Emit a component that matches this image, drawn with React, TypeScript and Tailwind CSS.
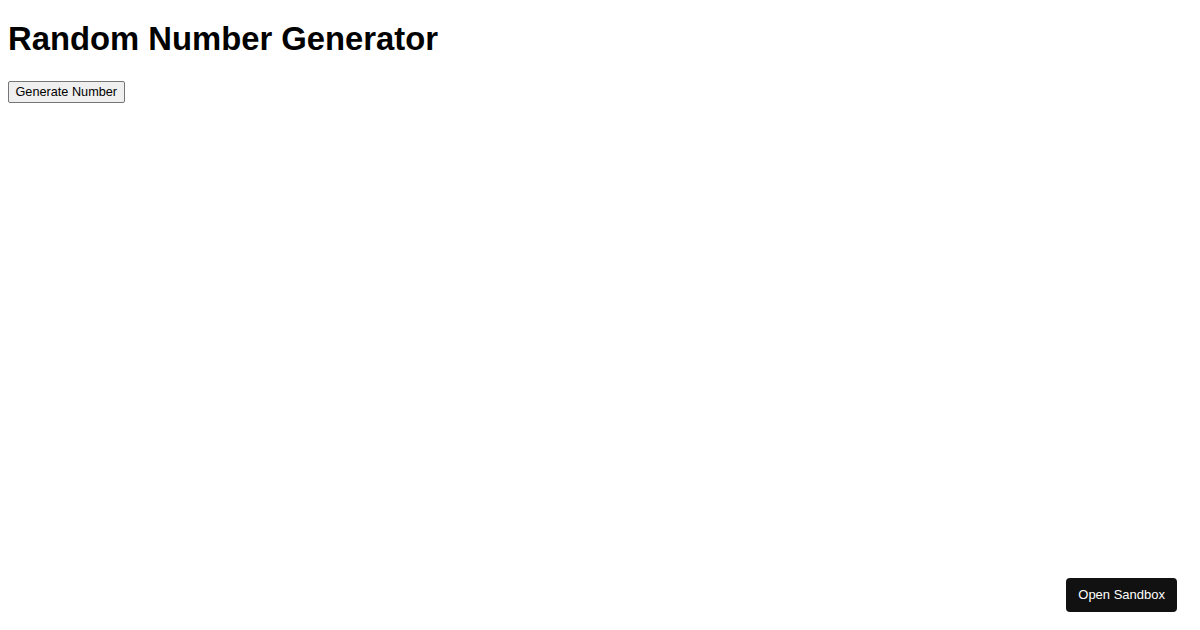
export default function App() {
  return (
    <div className="min-h-screen bg-white text-black font-['Liberation_Sans',Arial,sans-serif]">
      <div className="px-2 pt-[20px]">
        <h1 className="text-[32.8px] font-bold leading-[38px]">Random Number Generator</h1>
        <div className="mt-[21px]">
          <button className="h-[22px] px-[6.5px] text-[12.7px] leading-[16px] bg-[#efefef] border border-[#767676] rounded-[2px]">
            Generate Number
          </button>
        </div>
      </div>

      <button className="fixed right-[23px] bottom-[18px] h-[34px] px-[12px] rounded-[4px] bg-[#111111] text-white text-[13px] font-['Liberation_Sans',Arial,sans-serif]">
        Open Sandbox
      </button>
    </div>
  );
}
